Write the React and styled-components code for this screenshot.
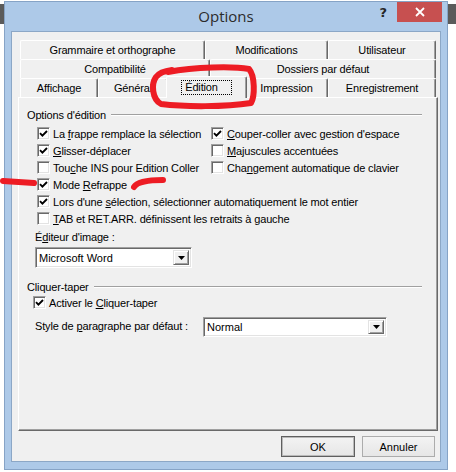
import React from 'react';
import styled, { createGlobalStyle, css } from 'styled-components';

const GlobalStyle = createGlobalStyle`
  html, body {
    margin: 0;
    padding: 0;
    width: 456px;
    height: 472px;
    overflow: hidden;
    background: linear-gradient(#ffffff 4px, #5b5b5b 4px, #5b5b5b 24px, #ffffff 24px);
  }
  * {
    box-sizing: border-box;
  }
`;

const Page = styled.div`
  position: relative;
  width: 456px;
  height: 472px;
  padding: 1px 0 0 4px;
  font-family: "Liberation Sans", Arial, sans-serif;
  font-size: 11px;
  letter-spacing: -0.15px;
  color: #000;
`;

const Window = styled.div`
  width: 444px;
  height: 469px;
  border: 1px solid #86a3c6;
  background: #adc9e8;
  padding: 0 6px 7px 6px;
  display: flex;
  flex-direction: column;
`;

const TitleBar = styled.div`
  height: 29px;
  display: grid;
  grid-template-columns: 1fr auto 1fr;
  align-items: start;
`;

const Title = styled.div`
  grid-column: 2;
  font-family: "Open Sans", "Noto Sans", sans-serif;
  font-size: 15px;
  letter-spacing: 0;
  color: #2b2b2b;
  line-height: 28px;
`;

const TitleButtons = styled.div`
  grid-column: 3;
  justify-self: end;
  display: flex;
  align-items: flex-start;
  margin-right: -1px;
`;

const HelpButton = styled.div`
  font-family: "DejaVu Sans", sans-serif;
  font-weight: bold;
  font-size: 13px;
  color: #262626;
  line-height: 14px;
  margin: 4px 10px 0 0;
`;

const CloseButton = styled.div`
  width: 45px;
  height: 20px;
  background: #c75050;
  display: flex;
  align-items: center;
  justify-content: center;
`;

const Client = styled.div`
  flex: 1;
  border: 1px solid #8ca7c6;
  background: #f0f0f0;
  padding: 8px 2px 4px 6px;
  display: flex;
  flex-direction: column;
`;

const TabControl = styled.div`
  width: 420px;
`;

const TabRow = styled.div`
  display: flex;
  padding-left: 2px;
  height: 19px;
`;

const Tab = styled.div`
  position: relative;
  width: ${(p) => p.$width}px;
  height: 19px;
  flex: none;
  display: flex;
  align-items: center;
  justify-content: center;
  background: #f0f0f0;
  border-top: 1px solid #ffffff;
  border-left: 1px solid #ffffff;
  border-right: 1px solid #696969;
  box-shadow: inset -1px 0 0 #a0a0a0;
  border-radius: 2px 2px 0 0;
  white-space: nowrap;
  ${(p) =>
    p.$selected &&
    css`
      width: ${p.$width + 4}px;
      height: 22px;
      margin: -2px -2px 0 -2px;
      z-index: 1;
    `}
`;

const FocusText = styled.span`
  border: 1px dotted #000;
  padding: 0 13px 0 3px;
  line-height: 13px;
`;

const Panel = styled.div`
  height: 334px;
  border-top: 1px solid #ffffff;
  border-left: 1px solid #ffffff;
  border-right: 1px solid #696969;
  border-bottom: 1px solid #696969;
  box-shadow: inset -1px -1px 0 #a0a0a0;
  padding: 10px 15px 0 8px;
`;

const GroupTitle = styled.div`
  display: flex;
  align-items: center;
  height: 13px;
  margin-top: ${(p) => p.$top || 0}px;

  &:after {
    content: '';
    flex: 1;
    margin-left: 5px;
    border-top: 1px solid #a0a0a0;
    border-bottom: 1px solid #ffffff;
  }
`;

const CheckGrid = styled.div`
  display: grid;
  grid-template-columns: 174px 1fr;
  grid-auto-rows: 17px;
  padding-left: 10px;
  margin-top: 4px;
`;

const CheckRow = styled.div`
  display: flex;
  align-items: center;
  height: 17px;
  gap: 3px;
  padding-left: ${(p) => p.$indent || 0}px;
  margin-top: ${(p) => p.$top || 0}px;
  white-space: nowrap;
`;

const Box = styled.span`
  width: 13px;
  height: 13px;
  flex: none;
  background: #ffffff;
  border: 1px solid;
  border-color: #a0a0a0 #ffffff #ffffff #a0a0a0;
  box-shadow: inset 1px 1px 0 #696969, inset -1px -1px 0 #e3e3e3;
  display: flex;
  align-items: center;
  justify-content: center;
`;

const FieldLabel = styled.div`
  height: 13px;
  line-height: 13px;
  padding-left: 8px;
  margin-top: ${(p) => p.$top || 0}px;
`;

const Combo = styled.div`
  width: ${(p) => p.$width}px;
  height: ${(p) => p.$height}px;
  margin-top: ${(p) => p.$top || 0}px;
  margin-left: ${(p) => p.$left || 0}px;
  background: #ffffff;
  border: 1px solid;
  border-color: #a0a0a0 #ffffff #ffffff #a0a0a0;
  box-shadow: inset 1px 1px 0 #696969, inset -1px -1px 0 #e3e3e3;
  display: flex;
  align-items: center;
  padding: 2px 2px 2px 2px;
`;

const ComboText = styled.span`
  flex: 1;
  padding-left: 1px;
  color: #000;
  letter-spacing: 0;
`;

const ComboArrow = styled.span`
  width: 16px;
  align-self: stretch;
  background: #f0f0f0;
  border: 1px solid;
  border-color: #e3e3e3 #696969 #696969 #e3e3e3;
  box-shadow: inset 1px 1px 0 #ffffff, inset -1px -1px 0 #a0a0a0;
  display: flex;
  align-items: center;
  justify-content: center;
`;

const StyleRow = styled.div`
  display: flex;
  align-items: center;
  margin-top: 6px;
`;

const StyleLabel = styled.span`
  width: 176px;
  padding-left: 8px;
  padding-bottom: 3px;
  flex: none;
`;

const Buttons = styled.div`
  display: flex;
  justify-content: flex-end;
  gap: 7px;
  margin-top: 5px;
  margin-right: 3px;
`;

const Button = styled.div`
  height: 21px;
  width: ${(p) => p.$width}px;
  display: flex;
  align-items: center;
  justify-content: center;
  letter-spacing: 0;
  background: linear-gradient(#f3f3f3, #e6e6e6);
  border: 1px solid ${(p) => (p.$default ? '#5f5f5f' : '#acacac')};
  box-shadow: ${(p) => (p.$default ? 'inset 0 0 0 1px #b9b9b9' : 'none')};
`;

const Annotations = styled.svg`
  position: absolute;
  top: 0;
  left: 0;
  pointer-events: none;
  z-index: 5;
`;

function CheckMark() {
  return (
    <svg width="9" height="9" viewBox="0 0 9 9">
      <path d="M1 4.2 L3.4 6.6 L8 2" fill="none" stroke="#000" strokeWidth="1.9" />
    </svg>
  );
}

function Check({ checked, children, indent, top }) {
  return (
    <CheckRow $indent={indent} $top={top}>
      <Box>{checked && <CheckMark />}</Box>
      <span>{children}</span>
    </CheckRow>
  );
}

function Arrow() {
  return (
    <svg width="7" height="4" viewBox="0 0 7 4">
      <path d="M0 0 H7 L3.5 4 Z" fill="#000" />
    </svg>
  );
}

export default function App() {
  return (
    <Page>
      <GlobalStyle />
      <Window>
        <TitleBar>
          <Title>Options</Title>
          <TitleButtons>
            <HelpButton>?</HelpButton>
            <CloseButton>
              <svg width="10" height="10" viewBox="0 0 10 10">
                <path d="M1 1 L9 9 M9 1 L1 9" stroke="#fff" strokeWidth="1.8" />
              </svg>
            </CloseButton>
          </TitleButtons>
        </TitleBar>
        <Client>
          <TabControl>
            <TabRow>
              <Tab $width={185}>Grammaire et orthographe</Tab>
              <Tab $width={123}>Modifications</Tab>
              <Tab $width={108}>Utilisateur</Tab>
            </TabRow>
            <TabRow>
              <Tab $width={190}>Compatibilité</Tab>
              <Tab $width={226}>Dossiers par défaut</Tab>
            </TabRow>
            <TabRow>
              <Tab $width={78}>Affichage</Tab>
              <Tab $width={70}>Général</Tab>
              <Tab $width={77} $selected>
                <FocusText>Édition</FocusText>
              </Tab>
              <Tab $width={83}>Impression</Tab>
              <Tab $width={108}>Enregistrement</Tab>
            </TabRow>
            <Panel>
              <GroupTitle>Options d'édition</GroupTitle>
              <CheckGrid>
                <Check checked>
                  La <u>f</u>rappe remplace la sélection
                </Check>
                <Check checked>
                  <u>C</u>ouper-coller avec gestion d'espace
                </Check>
                <Check checked>
                  <u>G</u>lisser-déplacer
                </Check>
                <Check>
                  <u>M</u>ajuscules accentuées
                </Check>
                <Check>
                  Tou<u>c</u>he INS pour Edition Coller
                </Check>
                <Check>
                  Cha<u>n</u>gement automatique de clavier
                </Check>
              </CheckGrid>
              <Check checked indent={10}>
                Mode <u>R</u>efrappe
              </Check>
              <Check checked indent={10}>
                Lors d'une <u>s</u>élection, sélectionner automatiquement le mot entier
              </Check>
              <Check indent={10}>
                <u>T</u>AB et RET.ARR. définissent les retraits à gauche
              </Check>
              <FieldLabel $top={4}>
                É<u>d</u>iteur d'image :
              </FieldLabel>
              <Combo $width={157} $height={21} $top={3} $left={8}>
                <ComboText>Microsoft Word</ComboText>
                <ComboArrow>
                  <Arrow />
                </ComboArrow>
              </Combo>
              <GroupTitle $top={12}>Cliquer-taper</GroupTitle>
              <Check checked indent={6} top={1}>
                Activer le <u>C</u>liquer-taper
              </Check>
              <StyleRow>
                <StyleLabel>
                  Style de <u>p</u>aragraphe par défaut :
                </StyleLabel>
                <Combo $width={184} $height={20}>
                  <ComboText>Normal</ComboText>
                  <ComboArrow>
                    <Arrow />
                  </ComboArrow>
                </Combo>
              </StyleRow>
            </Panel>
          </TabControl>
          <Buttons>
            <Button $width={74} $default>
              OK
            </Button>
            <Button $width={73}>Annuler</Button>
          </Buttons>
        </Client>
      </Window>
      <Annotations width="456" height="472" viewBox="0 0 456 472">
        <g fill="none" stroke="#ed1c24" strokeWidth="6" strokeLinecap="round" strokeLinejoin="round">
          <path d="M168 72 C195 67 232 66 249 69 C255 76 255 96 251 103 C225 107 185 107 161 104 C152 99 151 84 156 77 C159 73 164 71 172 70" />
          <path d="M3 181 L34 183" />
          <path d="M134 187 C137 182 146 180 163 180" />
        </g>
      </Annotations>
    </Page>
  );
}
